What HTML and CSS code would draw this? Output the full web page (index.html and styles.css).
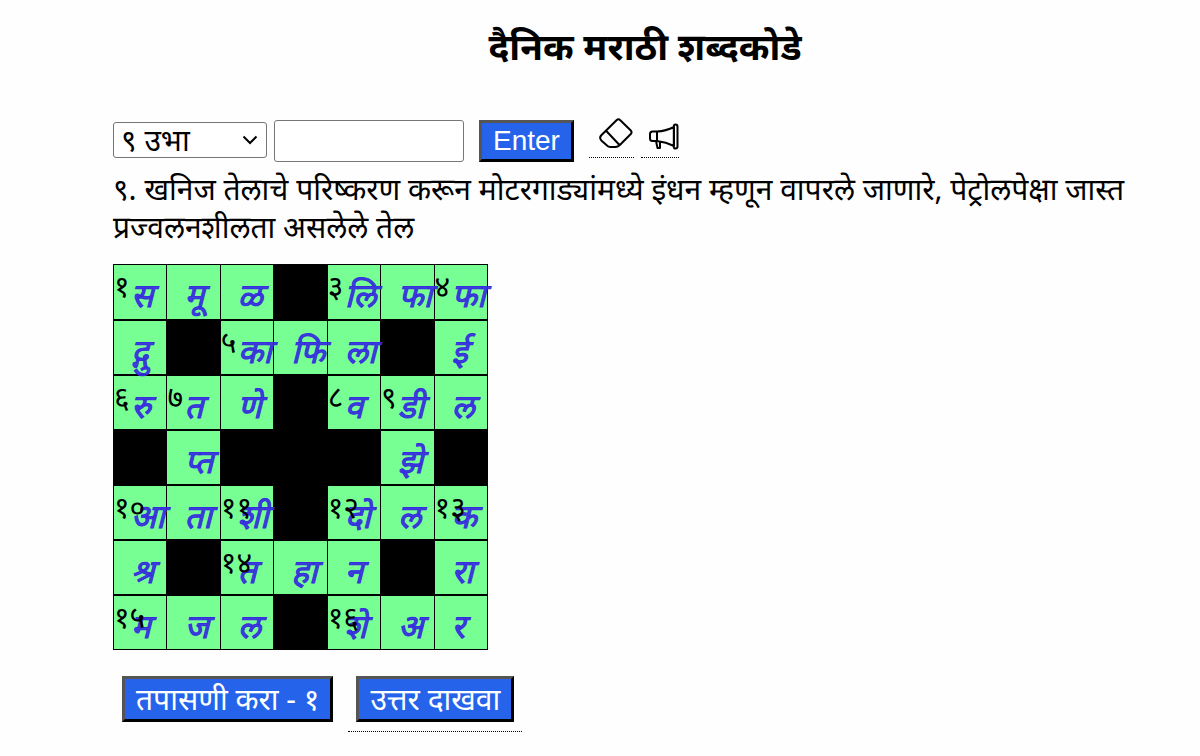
FILE: index.html
```html
<!DOCTYPE html>
<html lang="mr">
<head>
<meta charset="utf-8">
<title>दैनिक मराठी शब्दकोडे</title>
<link rel="stylesheet" href="styles.css">
</head>
<body>
<main class="page">
  <h1 class="title">दैनिक मराठी शब्दकोडे</h1>
  <form class="controls">
    <span class="picker">
      <select class="clue-select" aria-label="शब्द निवडा"><option>९ उभा</option></select>
      <svg class="chevron" viewBox="0 0 16 10" aria-hidden="true"><path d="M1.500 1.500 8 8l6.500-6.500"/></svg>
    </span>
    <input class="answer" type="text" aria-label="उत्तर">
    <button class="button enter" type="button">Enter</button>
    <button class="icon-button eraser" type="button" aria-label="पुसा">
      <svg class="icon" viewBox="0 0 34 32" aria-hidden="true"><path d="M2.300 17.300 17.500 2.200Q19.400.400 21.300 2.200L31.800 12.500Q33.300 14.200 31.800 16L20.600 27.300Q18.800 29 16.400 29H11.400Q9.400 29 8 27.600L2.300 22.400Q0 19.800 2.300 17.300ZM7.300 13 20.500 27"/></svg>
    </button>
    <button class="icon-button horn" type="button" aria-label="घोषणा">
      <svg class="icon" viewBox="0 0 30 27" aria-hidden="true"><path d="M3.500 8.500H8V18H3.500Q1 18 1 15.500V11Q1 8.500 3.500 8.500ZM8 8.500Q17 8 25 4V23Q17 19 8 18M26.500 1.500Q28.500 1.500 28.500 3.500V23.500Q28.500 25.500 26.500 25.500T24.800 23.500V3.500Q24.800 1.500 26.500 1.500ZM7 18 8.500 25H11V18.500"/></svg>
    </button>
  </form>
  <p class="clue">९. खनिज तेलाचे परिष्करण करून मोटरगाड्यांमध्ये इंधन म्हणून वापरले जाणारे, पेट्रोलपेक्षा जास्त प्रज्वलनशीलता असलेले तेल</p>
  <table class="crossword">
    <tbody>
      <tr><td><div class="cell"><span class="num">१</span>स</div></td><td><div class="cell">मू</div></td><td><div class="cell">ळ</div></td><td class="block"></td><td><div class="cell"><span class="num">३</span>लि</div></td><td><div class="cell">फा</div></td><td><div class="cell"><span class="num">४</span>फा</div></td></tr>
      <tr><td><div class="cell">द्गु</div></td><td class="block"></td><td><div class="cell"><span class="num">५</span>का</div></td><td><div class="cell">फि</div></td><td><div class="cell">ला</div></td><td class="block"></td><td><div class="cell">ई</div></td></tr>
      <tr><td><div class="cell"><span class="num">६</span>रु</div></td><td><div class="cell"><span class="num">७</span>त</div></td><td><div class="cell">णे</div></td><td class="block"></td><td><div class="cell"><span class="num">८</span>व</div></td><td><div class="cell"><span class="num">९</span>डी</div></td><td><div class="cell">ल</div></td></tr>
      <tr><td class="block"></td><td><div class="cell">प्त</div></td><td class="block"></td><td class="block"></td><td class="block"></td><td><div class="cell">झे</div></td><td class="block"></td></tr>
      <tr><td><div class="cell"><span class="num">१०</span>आ</div></td><td><div class="cell">ता</div></td><td><div class="cell"><span class="num">११</span>शी</div></td><td class="block"></td><td><div class="cell"><span class="num">१२</span>दो</div></td><td><div class="cell">ल</div></td><td><div class="cell"><span class="num">१३</span>क</div></td></tr>
      <tr><td><div class="cell">श्र</div></td><td class="block"></td><td><div class="cell"><span class="num">१४</span>त</div></td><td><div class="cell">हा</div></td><td><div class="cell">न</div></td><td class="block"></td><td><div class="cell">रा</div></td></tr>
      <tr><td><div class="cell"><span class="num">१५</span>म</div></td><td><div class="cell">ज</div></td><td><div class="cell">ल</div></td><td class="block"></td><td><div class="cell"><span class="num">१६</span>शे</div></td><td><div class="cell">अ</div></td><td><div class="cell">र</div></td></tr>
    </tbody>
  </table>
  <div class="actions">
    <button class="button" type="button">तपासणी करा - १</button>
    <span class="dotted"><button class="button" type="button">उत्तर दाखवा</button></span>
  </div>
</main>
</body>
</html>
```

FILE: styles.css
```css
* { box-sizing: border-box; }
body {
  margin: 0;
  background: #fefefe;
  color: #000;
  font-family: "Noto Sans", "Noto Sans Devanagari", "Liberation Sans", sans-serif;
  font-size: 30px;
}
.page { padding: 18px 23px 20px 113px; }
.title {
  margin: 0 0 44px;
  font-size: 37px;
  line-height: 56px;
  text-align: center;
}
.controls { display: flex; height: 44px; }
.picker { position: relative; display: flex; width: 154px; height: 36px; margin: 4px 7px 0 0; }
.clue-select {
  appearance: none;
  width: 100%;
  height: 36px;
  padding: 0 7px;
  border: 1px solid #767676;
  border-radius: 3px;
  background: #fff;
  color: #000;
  font: inherit;
  line-height: 30px;
}
.chevron {
  position: absolute;
  top: 13px;
  right: 9px;
  width: 16px;
  height: 10px;
  pointer-events: none;
  fill: none;
  stroke: #000;
  stroke-width: 2;
}
.answer {
  width: 190px;
  height: 42px;
  margin: 2px 15px 0 0;
  border: 1px solid #767676;
  border-radius: 3px;
  background: #fff;
  font: inherit;
}
.button {
  height: 46px;
  padding: 0 11px;
  border: 3px solid;
  border-color: #555 #000 #000 #555;
  border-radius: 0;
  background: #2563eb;
  color: #fff;
  font: inherit;
  line-height: 36px;
  white-space: nowrap;
}
.enter {
  height: 42px;
  margin: 2px 15px 0 0;
  font-family: "Liberation Sans", sans-serif;
  font-size: 28px;
}
.icon-button {
  display: flex;
  justify-content: center;
  height: 40px;
  padding: 0;
  border: 0;
  border-bottom: 1px dotted #000;
  background: none;
}
.icon { fill: none; stroke: #000; stroke-width: 2; stroke-linejoin: round; }
.eraser { width: 45px; margin-right: 7px; padding-left: 10px; }
.eraser .icon { width: 34px; height: 32px; }
.horn { width: 38px; padding: 5px 0 0 8px; }
.horn .icon { width: 30px; height: 27px; }
.clue { margin: 8px 0 18px; line-height: 38px; }
.crossword {
  width: 375px;
  border-collapse: collapse;
  table-layout: fixed;
}
.crossword td {
  height: 55px;
  padding: 0;
  border: 1px solid #000;
  border-bottom-width: 2px;
  background: #78ff94;
  vertical-align: top;
}
.crossword tr:last-child td { border-bottom-width: 1px; }
.crossword .block { background: #000; }
.cell {
  position: relative;
  height: 53px;
  padding-left: 17px;
  color: rgba(48, 36, 225, 0.9);
  font-family: "Liberation Sans", "Noto Sans Devanagari", sans-serif;
  font-size: 33px;
  font-style: italic;
  font-weight: 400;
  -webkit-text-stroke: 1px rgb(55, 45, 222);
  line-height: 62px;
  white-space: nowrap;
}
.num {
  position: absolute;
  top: 2px;
  left: 0;
  color: #000;
  font-family: "Noto Sans", "Noto Sans Devanagari", sans-serif;
  font-size: 30px;
  font-style: normal;
  -webkit-text-stroke: 0;
  line-height: 38px;
}
.actions { display: flex; gap: 15px; margin: 26px 0 0 9px; }
.dotted { padding: 0 8px 9px; border-bottom: 1px dotted #000; }
```
